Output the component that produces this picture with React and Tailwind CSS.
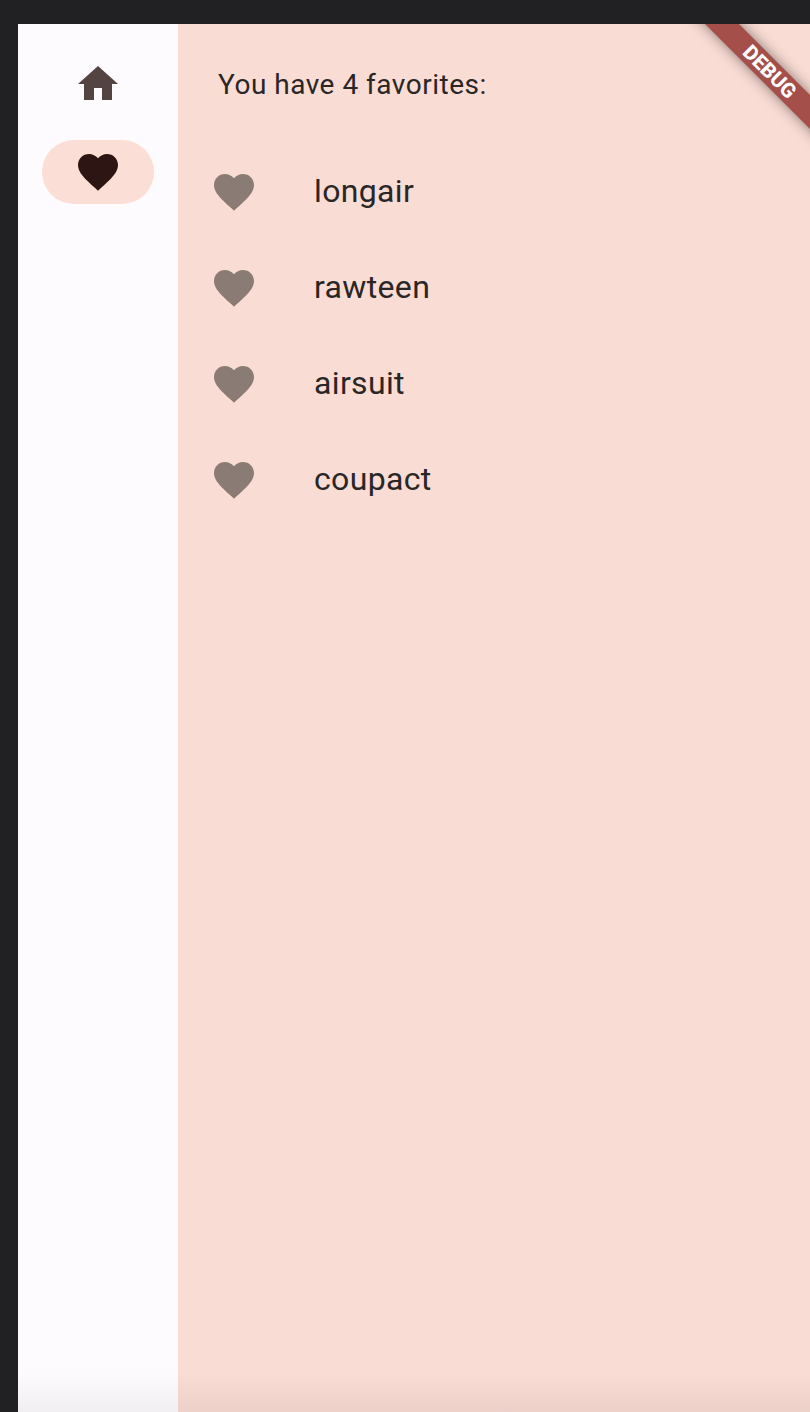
const HOME_PATH = 'M10 20v-6h4v6h5v-8h3L12 3 2 12h3v8z';
const HEART_PATH =
  'M12 21.35l-1.45-1.32C5.4 15.36 2 12.28 2 8.5 2 5.42 4.42 3 7.5 3c1.74 0 3.41.81 4.5 2.09C13.09 3.81 14.76 3 16.5 3 19.58 3 22 5.42 22 8.5c0 3.78-3.4 6.86-8.55 11.54L12 21.35z';

const favorites = ['longair', 'rawteen', 'airsuit', 'coupact'];

function Icon({ path, className }) {
  return (
    <svg viewBox="0 0 24 24" className={className} fill="currentColor">
      <path d={path} />
    </svg>
  );
}

function Rail() {
  return (
    <nav className="flex w-40 shrink-0 flex-col items-center gap-6 bg-[#fefbff] pt-7">
      <div className="flex h-16 w-28 items-center justify-center rounded-full">
        <Icon path={HOME_PATH} className="h-12 w-12 text-[#534341]" />
      </div>
      <div className="flex h-16 w-28 items-center justify-center rounded-full bg-[#fbded6]">
        <Icon path={HEART_PATH} className="h-12 w-12 text-[#2c1512]" />
      </div>
    </nav>
  );
}

function DebugBanner() {
  return (
    <div className="absolute top-[35px] right-[-59px] flex h-6 w-[200px] rotate-45 items-center justify-center bg-[#a44f4a] shadow-[0_0_14px_rgba(0,0,0,0.45)]">
      <span className="relative left-px text-[20.5px] leading-6 font-extrabold text-white">DEBUG</span>
    </div>
  );
}

export default function App() {
  return (
    <div className="relative flex h-screen flex-col overflow-hidden bg-[#212123] pt-6 pl-[18px] font-['Roboto',sans-serif]">
      <div className="flex min-h-0 flex-1">
        <Rail />
        <main className="relative flex-1 overflow-hidden bg-[#f9dcd4] text-[#2a2626]">
          <p className="px-10 pt-[41px] text-[28px] leading-10 tracking-[0.5px]">You have 4 favorites:</p>
          <ul className="pt-[39px]">
            {favorites.map((name) => (
              <li key={name} className="flex h-24 items-center gap-14 pl-8">
                <Icon path={HEART_PATH} className="h-12 w-12 text-[#8b7b75]" />
                <span className="relative top-[-1px] text-[32px] leading-12 tracking-[0.35px]">{name}</span>
              </li>
            ))}
          </ul>
          <DebugBanner />
        </main>
      </div>
      {/* soft shadow along the bottom edge */}
      <div className="pointer-events-none absolute right-0 bottom-0 left-[18px] h-10 bg-gradient-to-b from-transparent to-[rgba(0,0,0,0.05)]" />
    </div>
  );
}
